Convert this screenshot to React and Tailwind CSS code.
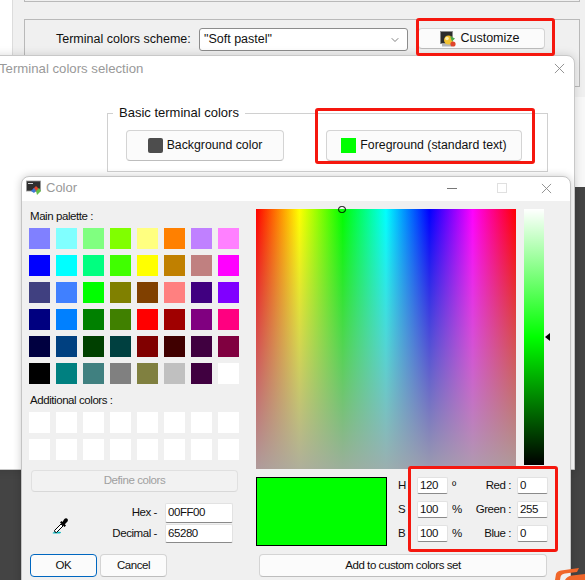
import React from 'react';
import { ChevronDown } from 'lucide-react';
import { twMerge } from 'tailwind-merge';

const mainPalette = [
    '#8080ff', '#80ffff', '#80ff80', '#80ff00', '#ffff80', '#ff8000', '#c080ff', '#ff80ff',
    '#0000ff', '#00ffff', '#00ff80', '#40ff00', '#ffff00', '#c08000', '#c08080', '#ff00ff',
    '#404080', '#4080ff', '#00ff00', '#808000', '#804000', '#ff8080', '#400080', '#8000ff',
    '#000080', '#0080ff', '#008000', '#408000', '#ff0000', '#a00000', '#800080', '#ff0080',
    '#000040', '#004080', '#004000', '#004040', '#800000', '#400000', '#400040', '#800040',
    '#000000', '#008080', '#408080', '#808080', '#808040', '#c0c0c0', '#400040', '#ffffff',
];

const additional = Array.from({ length: 16 });

function CloseIcon({ className }) {
    return (
        <svg viewBox="0 0 12 12" className={className} fill="none" stroke="#8a8a8a" strokeWidth="1">
            <path d="M1 1 L11 11 M11 1 L1 11" />
        </svg>
    );
}

function WinButton({ children, className = '' }) {
    return (
        <div className={twMerge('flex items-center justify-center bg-[#fbfbfb] border border-[#d4d4d4] border-b-[#bdbdbd] rounded-[4px] text-[#111]', className)}>
            {children}
        </div>
    );
}

function Field({ value, className = '' }) {
    return (
        <div className={twMerge('flex items-center bg-white border border-[#e2e2e2] border-b-[#8a8a8a] rounded-[2px] pl-[2px] text-[#111]', className)}>
            {value}
        </div>
    );
}

function Swatches({ colors }) {
    return (
        <div className="grid grid-cols-[repeat(8,21px)] auto-rows-[21px] gap-[6px]">
            {colors.map((c, i) => (
                <div key={i} className={c ? '' : 'bg-white'} style={c ? { backgroundColor: c } : undefined} />
            ))}
        </div>
    );
}

function TerminalIcon({ className }) {
    return (
        <svg viewBox="0 0 16 16" className={className}>
            <rect x="0.5" y="0.5" width="12" height="12" fill="#2c2c2c" stroke="#8a8a8a" strokeWidth="0.8" />
            <rect x="2" y="12.5" width="10" height="3" fill="#b5b5b5" />
            <circle cx="8.5" cy="9" r="4.5" fill="#f2c230" />
            <circle cx="7" cy="7.5" r="1.8" fill="#fbeeb0" />
            <path d="M10 5 L15 7.5 L12 10.5 Z" fill="#4aa84a" />
            <circle cx="13" cy="13" r="2.6" fill="#e0452c" />
        </svg>
    );
}

function ColorIcon({ className }) {
    return (
        <svg viewBox="0 0 16 16" className={className}>
            <rect x="0.5" y="1" width="14" height="10" fill="#2e2e2e" stroke="#9a9a9a" strokeWidth="0.8" />
            <rect x="2" y="3" width="5" height="1" fill="#d0d0d0" />
            <path d="M7 9 L10 6 L13 9 L10 12 Z" fill="#e0452c" />
            <path d="M5 11 L8 8 L10 11 L8 13 Z" fill="#3b78d8" />
            <path d="M10 11 L13 8 L15 11 L11 15 Z" fill="#62c04a" />
        </svg>
    );
}

function Dropper({ className }) {
    return (
        <svg viewBox="0 0 17 16" className={className}>
            <path d="M0.5 15 Q3 12.5 5 13.5 L9 14 Q9 15.5 6 15.5 L1 15.5 Z" fill="#12b8c0" />
            <path d="M3 14 L2.5 12.5 L9 6 L11 8 L4.5 14.5 Z" fill="#fff" stroke="#000" strokeWidth="1" />
            <path d="M8 4.5 L12.5 9 L14 7.5 L12.8 6.3 L15.5 3.5 Q16.5 1.5 15 0.6 Q13.5 -0.2 12 1.5 L10.5 4 L9.5 3 Z" fill="#000" />
        </svg>
    );
}

function Annotation({ className }) {
    return <div className={`absolute border-[3px] border-[#f5170e] rounded-[3px] ${className}`} />;
}

export default function App() {
    return (
        <div className="relative w-[585px] h-[580px] overflow-hidden bg-white font-['Liberation_Sans',sans-serif] text-[12px] text-[#111]">
            {/* Settings page behind */}
            <div className="absolute left-[12px] top-0 right-0 h-[97px] bg-[#f0f0f0] border-l border-[#dcdcdc]">
                <div className="absolute left-[11px] top-[-20px] w-[556px] h-[22px] border border-[#b9b9b9]" />
                <div className="absolute left-[11px] top-[19px] w-[556px] h-[68px] border border-[#b9b9b9]" />
            </div>
            <div className="absolute left-[575px] top-[97px] right-0 h-[90px] bg-[#f8f8f8]" />
            <div className="absolute left-0 top-[187px] right-0 bottom-0 bg-[#444444]" />

            <div className="absolute left-[56px] top-[28px] flex items-start text-[12.5px]">
                <div className="w-[143px] h-[22px] flex items-center">Terminal colors scheme:</div>
                <div className="w-[209px] h-[23px] flex items-center justify-between bg-white border border-[#8c8c8c] rounded-[3px] pl-[4px] pr-[6px]">
                    <span>"Soft pastel"</span>
                    <ChevronDown size={12} strokeWidth={1.5} className="text-[#555]" />
                </div>
                <WinButton className="ml-[10px] w-[127px] h-[21px] gap-[4px] pr-[3px]">
                    <TerminalIcon className="w-[16px] h-[16px]" />
                    Customize
                </WinButton>
            </div>

            {/* Terminal colors selection window */}
            <div className="absolute left-[-20px] top-[55px] w-[595px] h-[415px] bg-white border border-[#c8c8c8] rounded-t-[8px] shadow-[0_0_10px_rgba(0,0,0,0.15)]">
                <div className="flex items-center justify-between h-[25px] pl-[18px] pr-[9px]">
                    <span className="text-[13.2px] text-[#999]">Terminal colors selection</span>
                    <CloseIcon className="w-[11px] h-[11px]" />
                </div>
                <div className="relative ml-[126px] mt-[32px] w-[441px] h-[59px] border border-[#d0d0d0] text-[12.3px]">
                    <span className="absolute left-[5px] top-[-9px] bg-white px-[6px] text-[13px] leading-[16px]">Basic terminal colors</span>
                    <div className="flex pt-[16px] pl-[18px] gap-[42px]">
                        <WinButton className="w-[158px] h-[31px] gap-[4px]">
                            <span className="w-[15px] h-[15px] rounded-[2px] bg-[#4d4d4d]" />
                            Background color
                        </WinButton>
                        <WinButton className="w-[196px] h-[31px] gap-[4px]">
                            <span className="w-[15px] h-[15px] bg-[#00ff00]" />
                            Foreground (standard text)
                        </WinButton>
                    </div>
                </div>
            </div>

            {/* Color window */}
            <div className="absolute left-[21px] top-[176px] w-[550px] h-[420px] flex flex-col bg-white border border-[#c4c4c4] rounded-t-[8px] shadow-[0_0_8px_rgba(0,0,0,0.2)] text-[11.5px] tracking-[-0.43px]">
                <div className="flex items-center h-[24px] pl-[4px] pb-[2px] shrink-0">
                    <ColorIcon className="w-[16px] h-[16px]" />
                    <span className="ml-[4px] text-[13px] tracking-normal text-[#999]">Color</span>
                    <div className="ml-auto flex items-center">
                        <div className="w-[10px] border-t border-[#777]" />
                        <div className="ml-[40px] w-[10px] h-[10px] border border-[#e0e0e0]" />
                        <CloseIcon className="ml-[34px] mr-[18px] w-[11px] h-[11px]" />
                    </div>
                </div>
                <div className="flex flex-1 bg-[#f0f0f0]">
                    {/* Left column */}
                    <div className="w-[234px] pl-[7px]">
                        <div className="h-[27px] pt-[8px] pl-[1px] leading-[14px]">Main palette :</div>
                        <Swatches colors={mainPalette} />
                        <div className="h-[28px] pt-[9px] pl-[1px] leading-[14px]">Additional colors :</div>
                        <Swatches colors={additional} />
                        <WinButton className="mt-[10px] ml-[2px] w-[207px] h-[22px] bg-[#f2f2f2] border-[#e0e0e0] border-b-[#d8d8d8] text-[#a0a0a0]">
                            Define colors
                        </WinButton>
                        <div className="flex mt-[11px]">
                            <Dropper className="mt-[15px] ml-[23px] w-[17px] h-[16px]" />
                            <div className="flex flex-col gap-px">
                                <div className="flex items-center h-[20px]">
                                    <span className="w-[88px] text-right whitespace-nowrap">Hex -</span>
                                    <Field value="00FF00" className="ml-[8px] w-[68px] h-[20px] shrink-0" />
                                </div>
                                <div className="flex items-center h-[19px]">
                                    <span className="w-[88px] text-right whitespace-nowrap">Decimal -</span>
                                    <Field value="65280" className="ml-[8px] w-[68px] h-[19px] shrink-0" />
                                </div>
                            </div>
                        </div>
                        <div className="flex mt-[11px] ml-[1px] gap-[3px]">
                            <WinButton className="w-[67px] h-[23px] border-[1.5px] border-[#0067c0] border-b-[#0067c0]">OK</WinButton>
                            <WinButton className="w-[67px] h-[23px]">Cancel</WinButton>
                        </div>
                    </div>

                    {/* Right column */}
                    <div className="pt-[8px]">
                        <div className="flex items-start">
                            <div className="w-[260px] h-[260px] bg-[linear-gradient(to_bottom,transparent,rgba(168,168,168,0.92)),linear-gradient(to_right,#f00,#ff0,#0f0,#0ff,#00f,#f0f,#f00)] relative">
                                <div className="absolute left-[82px] top-[-3px] w-[8px] h-[7px] rounded-full border border-black" />
                            </div>
                            <div className="relative ml-[8px] w-[20px] h-[256px] bg-[linear-gradient(to_bottom,#fff,#0f0_50%,#000)]">
                                <div className="absolute left-[21px] top-[124px] w-0 h-0 border-y-[4px] border-y-transparent border-r-[5px] border-r-black" />
                            </div>
                        </div>
                        <div className="flex mt-[8px]">
                            <div className="w-[131px] h-[69px] bg-[#00ff00] border border-black" />
                            <div className="ml-[11px] grid grid-cols-[19px_31px_69px_31px] auto-rows-[17px] gap-y-[7px] items-center">
                                <span>H</span>
                                <Field value="120" className="h-[17px]" />
                                <div className="flex justify-between pr-[6px]">
                                    <span className="pl-[4px]">º</span>
                                    <span>Red :</span>
                                </div>
                                <Field value="0" className="h-[17px]" />
                                <span>S</span>
                                <Field value="100" className="h-[17px]" />
                                <div className="flex justify-between pr-[6px]">
                                    <span className="pl-[4px]">%</span>
                                    <span>Green :</span>
                                </div>
                                <Field value="255" className="h-[17px]" />
                                <span>B</span>
                                <Field value="100" className="h-[17px]" />
                                <div className="flex justify-between pr-[6px]">
                                    <span className="pl-[4px]">%</span>
                                    <span>Blue :</span>
                                </div>
                                <Field value="0" className="h-[17px]" />
                            </div>
                        </div>
                        <WinButton className="mt-[8px] ml-[3px] w-[288px] h-[23px]">Add to custom colors set</WinButton>
                    </div>
                </div>
            </div>

            {/* Red annotations */}
            <Annotation className="left-[416px] top-[18px] w-[139px] h-[38px]" />
            <Annotation className="left-[315px] top-[108px] w-[220px] h-[56px]" />
            <Annotation className="left-[408px] top-[466px] w-[150px] h-[86px]" />

            {/* Corner logo */}
            <svg viewBox="0 0 30 12" className="absolute left-[555px] top-[568px] w-[30px] h-[12px]">
                <path d="M0 12 L1 6 Q2 3 6 2.5 L24 0 L22 4 L10 5.5 Q6 6 5.5 9 L5 12 Z" fill="#f0662a" />
                <path d="M10 12 Q12 8 17 7.5 L30 6 L30 12 Z" fill="#f0662a" />
            </svg>
        </div>
    );
}
